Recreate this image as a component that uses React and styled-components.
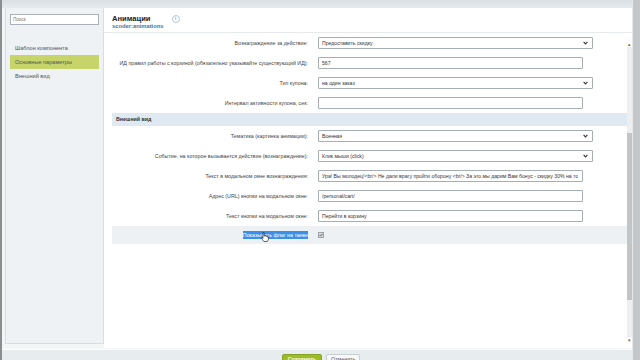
import styled, { createGlobalStyle } from "styled-components";

const GlobalStyle = createGlobalStyle`
  html, body {
    margin: 0;
    padding: 0;
    width: 640px;
    height: 360px;
    overflow: hidden;
    background: #e4e9ec;
  }
  body {
    font-family: "Liberation Sans", Arial, sans-serif;
  }
`;

const menu = [
  { title: "Шаблон компонента" },
  { title: "Основные параметры", active: true },
  { title: "Внешний вид" },
];

const mainRows = [
  { label: "Вознаграждение за действие:", value: "Предоставить скидку", select: true },
  { label: "ИД правил работы с корзиной (обязательно указывайте существующий ИД):", value: "567" },
  { label: "Тип купона:", value: "на один заказ", select: true },
  { label: "Интервал активности купона, сек:", value: "" },
];

const viewRows = [
  { label: "Тематика (картинка анимации):", value: "Военная", select: true },
  {
    label: "Событие, на которое вызывается действие (вознаграждение):",
    value: "Клик мыши (click)",
    select: true,
  },
  {
    label: "Текст в модальном окне вознаграждения:",
    value:
      "Ура! Вы молодец!<br/> Не дали врагу пройти оборону <br/> За это мы дарим Вам бонус - скидку 30% на товары",
  },
  { label: "Адрес (URL) кнопки на модальном окне:", value: "/personal/cart/" },
  { label: "Текст кнопки на модальном окне:", value: "Перейти в корзину" },
];

const Chevron = () => (
  <svg width="5" height="4" viewBox="0 0 5 4">
    <path d="M0.6 0.8 L2.5 2.9 L4.4 0.8" fill="none" stroke="#333" strokeWidth="1.1" />
  </svg>
);

const Pointer = () => (
  <svg width="8" height="10" viewBox="0 0 8 10">
    <path
      d="M2 0.5 L3 0.5 L3 4 L4 4 L4 3.6 L5 3.6 L5 4.2 L6 4.2 L6 4.8 L7 4.8 L7.5 7 L6.5 9.5 L2.8 9.5 L1 6.8 L0.6 5.6 L1.4 5.4 L2 6.2 Z"
      fill="#fff"
      stroke="#111"
      strokeWidth="0.6"
      strokeLinejoin="round"
    />
  </svg>
);

const App = () => {
  return (
    <Window>
      <GlobalStyle />
      <LeftEdge />
      <Body>
        <TopBar />
        <Workspace>
          <Sidebar>
            <Search>Поиск</Search>
            <Menu>
              {menu.map((item) => (
                <MenuItem key={item.title} $active={item.active}>
                  {item.title}
                </MenuItem>
              ))}
            </Menu>
          </Sidebar>
          <Main>
            <Header>
              <TitleBox>
                <Title>Анимации</Title>
                <Subtitle>scoder:animations</Subtitle>
              </TitleBox>
              <InfoIcon>i</InfoIcon>
            </Header>
            <Scroller>
              <Form>
                {mainRows.map((row) => (
                  <Row key={row.label}>
                    <Label>{row.label}</Label>
                    <Field $select={row.select}>
                      <span>{row.value}</span>
                      {row.select && <Chevron />}
                    </Field>
                  </Row>
                ))}
                <Section>Внешний вид</Section>
                {viewRows.map((row) => (
                  <Row key={row.label}>
                    <Label>{row.label}</Label>
                    <Field $select={row.select}>
                      <span>{row.value}</span>
                      {row.select && <Chevron />}
                    </Field>
                  </Row>
                ))}
                <Row $hover>
                  <Label>
                    <Selected>
                      Показывать флаг на танке
                      <Cursor>
                        <Pointer />
                      </Cursor>
                    </Selected>
                  </Label>
                  <Checkbox>
                    <svg width="4" height="4" viewBox="0 0 4 4">
                      <path d="M0.5 2 L1.6 3.1 L3.5 0.8" fill="none" stroke="#444" strokeWidth="0.8" />
                    </svg>
                  </Checkbox>
                </Row>
              </Form>
              <ScrollBar>
                <Arrow>▴</Arrow>
                <Track>
                  <Thumb />
                </Track>
                <Arrow>▾</Arrow>
              </ScrollBar>
            </Scroller>
          </Main>
        </Workspace>
        <Footer>
          <Button $primary>Сохранить</Button>
          <Button>Отменить</Button>
        </Footer>
      </Body>
      <RightEdge />
    </Window>
  );
};

export default App;

const Window = styled.div`
  display: flex;
  width: 640px;
  height: 360px;
  overflow: hidden;
  background: #e4e9ec;
`;

const LeftEdge = styled.div`
  width: 2px;
  background: #8a8e91;
`;

const RightEdge = styled.div`
  width: 8px;
  background: #c3c7ca;
  border-left: 1px solid #e6e9eb;
  box-sizing: border-box;
`;

const Body = styled.div`
  flex: 1;
  display: flex;
  flex-direction: column;
  min-width: 0;
`;

const TopBar = styled.div`
  height: 8px;
  background: linear-gradient(#d9dfe3, #e6ebee);
`;

const Workspace = styled.div`
  flex: 1;
  display: flex;
  padding-left: 3px;
  min-height: 0;
  background: #f3f6f7;
`;

const Sidebar = styled.div`
  width: 99px;
  height: 336px;
  box-sizing: border-box;
  background: #eef2f4;
  border: 1px solid #d8dde0;
  border-top: none;
  padding: 6px 4px 0 4px;
`;

const Search = styled.div`
  height: 11px;
  box-sizing: border-box;
  background: #fff;
  border: 1px solid #a9b1b6;
  font-size: 4.6px;
  line-height: 9px;
  color: #777;
  padding-left: 2px;
`;

const Menu = styled.div`
  margin-top: 16px;
  display: flex;
  flex-direction: column;
`;

const MenuItem = styled.div`
  height: 14px;
  line-height: 14px;
  padding-left: 5px;
  font-size: 5.6px;
  color: #555;
  background: ${(p) => (p.$active ? "#c6d46a" : "transparent")};
`;

const Main = styled.div`
  flex: 1;
  display: flex;
  flex-direction: column;
  background: #fff;
  margin-bottom: 1px;
  min-width: 0;
`;

const Header = styled.div`
  height: 25px;
  box-sizing: border-box;
  border-bottom: 1px solid #e7eaec;
  padding: 6px 0 0 8px;
  display: flex;
  align-items: flex-start;
  gap: 8px;
`;

const TitleBox = styled.div`
  display: flex;
  flex-direction: column;
`;

const Title = styled.div`
  font-size: 7.6px;
  line-height: 9px;
  font-weight: bold;
  color: #222;
`;

const Subtitle = styled.div`
  font-size: 5.8px;
  line-height: 7px;
  font-weight: bold;
  color: #3b78a0;
`;

const InfoIcon = styled.div`
  margin-top: 1px;
  width: 6px;
  height: 6px;
  border-radius: 50%;
  border: 1px solid #b8c8d6;
  color: #8fa7bb;
  font-size: 4.5px;
  line-height: 6px;
  text-align: center;
  font-weight: bold;
`;

const Scroller = styled.div`
  flex: 1;
  display: flex;
  min-height: 0;
`;

const Form = styled.div`
  flex: 1;
  padding-left: 8px;
  display: flex;
  flex-direction: column;
`;

const Row = styled.div`
  display: grid;
  grid-template-columns: 196px 1fr;
  column-gap: 10px;
  align-items: center;
  height: ${(p) => (p.$hover ? "18px" : "20px")};
  background: ${(p) => (p.$hover ? "#eef1f3" : "transparent")};
`;

const Label = styled.div`
  text-align: right;
  font-size: 5.3px;
  color: #444;
  white-space: nowrap;
`;

const Field = styled.div`
  width: ${(p) => (p.$select ? "275px" : "265px")};
  height: 12px;
  box-sizing: border-box;
  border: 1px solid #a7aeb3;
  border-radius: 1px;
  background: #fff;
  display: flex;
  align-items: center;
  justify-content: space-between;
  padding: 0 4px 0 3px;
  font-size: 5.15px;
  color: #333;
  overflow: hidden;

  span {
    white-space: nowrap;
    overflow: hidden;
  }

  svg {
    flex-shrink: 0;
  }
`;

const Section = styled.div`
  height: 13px;
  line-height: 13px;
  padding-left: 4px;
  background: #dfe9f2;
  font-size: 5.3px;
  font-weight: bold;
  color: #333;
`;

const Selected = styled.span`
  position: relative;
  background: #3a8fe8;
  color: #fff;
  padding: 1px 0;
`;

const Cursor = styled.span`
  position: absolute;
  left: 18px;
  top: 1px;
  line-height: 0;
`;

const Checkbox = styled.div`
  width: 6px;
  height: 6px;
  box-sizing: border-box;
  border: 1px solid #9aa3a9;
  background: #d9dde0;
  display: flex;
  align-items: center;
  justify-content: center;
`;

const ScrollBar = styled.div`
  width: 5px;
  display: flex;
  flex-direction: column;
  padding: 8px 0 5px;
  box-sizing: border-box;
`;

const Arrow = styled.div`
  height: 6px;
  font-size: 5px;
  line-height: 6px;
  text-align: center;
  color: #666;
`;

const Track = styled.div`
  flex: 1;
  background: #eeeeee;
`;

const Thumb = styled.div`
  margin-top: 86px;
  height: 167px;
  background: #c2c5c7;
`;

const Footer = styled.div`
  height: 11px;
  border-top: 1px solid #fff;
  background: #e7ecef;
  display: flex;
  justify-content: center;
  align-items: flex-start;
  gap: 4px;
  padding: 4px 0 0 8px;
  box-sizing: border-box;
  overflow: hidden;
`;

const Button = styled.div`
  flex-shrink: 0;
  height: 12px;
  padding: 0 ${(p) => (p.$primary ? "5px" : "4px")};
  box-sizing: border-box;
  border-radius: 2px;
  border: 1px solid ${(p) => (p.$primary ? "#86a224" : "#c9ced1")};
  background: ${(p) => (p.$primary ? "#9dbc2a" : "#f7f8f9")};
  color: ${(p) => (p.$primary ? "#fff" : "#555")};
  font-size: 5.3px;
  line-height: 9px;
  font-weight: ${(p) => (p.$primary ? "bold" : "normal")};
`;
